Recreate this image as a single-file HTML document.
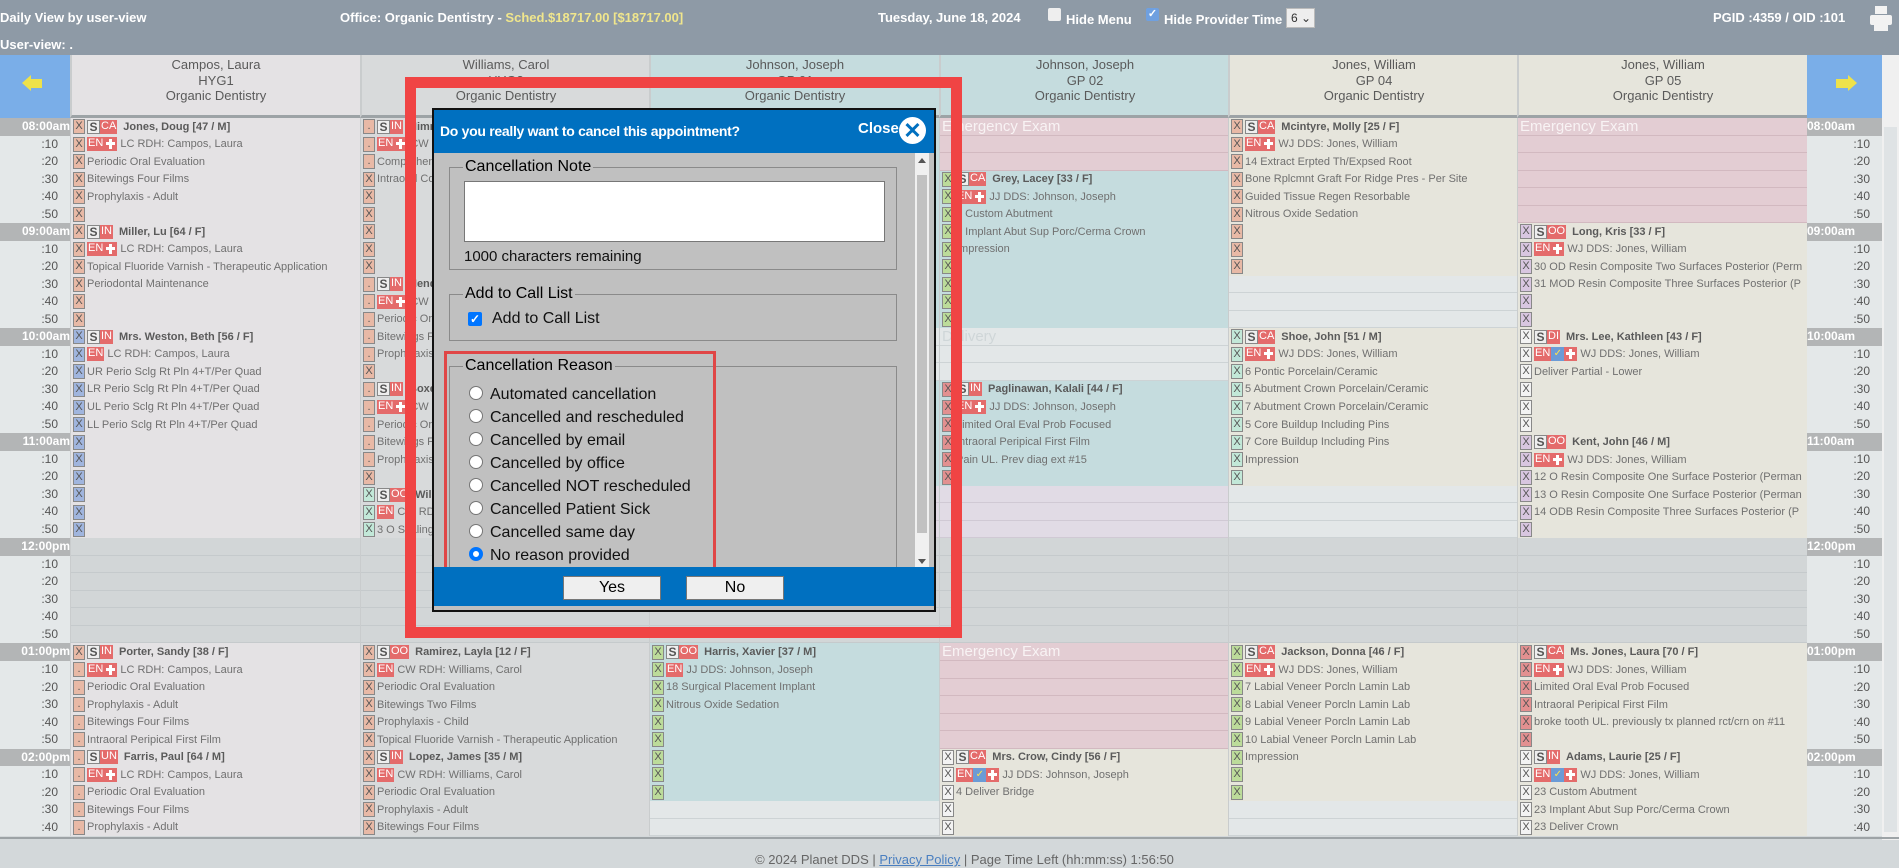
<!DOCTYPE html>
<html><head><meta charset="utf-8">
<style>
*{box-sizing:border-box;margin:0;padding:0}
body{width:1899px;height:868px;overflow:hidden;background:#d3d8da;font-family:"Liberation Sans",sans-serif;position:relative}
.a{position:absolute}
.top{left:0;top:0;width:1899px;height:55px;background:#8e9aa6;color:#fff;font-weight:bold;font-size:13px}
.top span{position:absolute;white-space:nowrap}
.hdr{top:55px;height:63px;width:290px;text-align:center;font-size:13px;color:#5a5a5a;line-height:15.5px;padding-top:2px;border-left:2px solid #c9cccd;border-bottom:3px solid #9da3a6}
.arr{background:#7aaee8;top:55px;height:63px}
.col{top:118px;width:290px;border-left:1px solid #c9cccd;font-size:11px;color:#707070}
.r{height:17.53px;white-space:nowrap;overflow:hidden;display:flex;align-items:center;padding-left:2px}
.e{background:#e3e7e8;border-bottom:1px solid #cdd3d5}
.l{background:#d2d6d7;border-bottom:1px solid #c5cacc}
.pk{background:#e3cdd3;border-bottom:1px solid #d2b9c0}
.lv{background:#e1dbe5;border-bottom:1px solid #d0c9d4}
.em{color:rgba(255,255,255,.75);font-size:15px}
i{font-style:normal;display:inline-block;height:14px;line-height:13px;text-align:center;font-size:11px;flex:none}
.x{width:12px;height:15px;border:1px solid #888;color:#555;margin-right:2px}
.o{background:#e8b9a6}.bl{background:#a0b5de}.g{background:#bcdc9a}.m{background:#c2e8d8}.v{background:#d8c6e0}.w{background:#f3f3f3}.rd{background:#e29090}
.s{width:13px;border:1px solid #888;background:#eee;color:#555;font-weight:bold;font-size:12px}
.t{background:#e46b6b;color:#fff;padding:0 1px;font-size:11px}
.p{width:13px;background:#e46b6b;position:relative}
.p:after{content:"";position:absolute;left:5px;top:2px;width:3px;height:10px;background:#fff}
.p:before{content:"";position:absolute;left:2px;top:5px;width:9px;height:3px;background:#fff}
.c{width:13px;background:#6b9bd6;color:#ffe24a;font-size:10px}
b{font-weight:bold;color:#5a5a5a;margin-left:6px}
.tc{top:118px;width:70px;font-size:12px;color:#555;background:#e4e8e9}
.tc div{height:17.53px;line-height:17.53px;text-align:right;padding-right:12px}
.tc .h{background:#b3b5b6;color:#fff;font-weight:bold;text-align:right;padding-right:0}
</style></head><body>

<div class="a top">
<span style="left:0;top:10px">Daily View by user-view</span>
<span style="left:340px;top:10px">Office: Organic Dentistry - <span style="position:static;color:#f0e68c">Sched.$18717.00 [$18717.00]</span></span>
<span style="left:878px;top:10px">Tuesday, June 18, 2024</span>
<span style="left:1048px;top:8px;width:13px;height:13px;background:#eee;border-radius:2px"></span>
<span style="left:1066px;top:12px">Hide Menu</span>
<span style="left:1146px;top:8px;width:13px;height:13px;background:#6fa0e0;border-radius:2px;font-size:11px;text-align:center;line-height:13px">✓</span>
<span style="left:1164px;top:12px">Hide Provider Time</span>
<span style="left:1286px;top:8px;width:29px;height:20px;background:#eee;border:1px solid #bbb;color:#333;font-weight:normal;font-size:12px;line-height:18px;padding-left:4px">6 ⌄</span>
<span style="left:1713px;top:10px">PGID :4359 / OID :101</span>
<span style="left:1870px;top:6px;width:22px;height:26px">
<span style="left:5px;top:0;width:12px;height:8px;background:#f2f2f2"></span>
<span style="left:0;top:9px;width:22px;height:10px;background:#f2f2f2;border-radius:2px"></span>
<span style="left:4px;top:19px;width:14px;height:6px;background:#f2f2f2"></span></span>
<span style="left:0;top:37px">User-view: .</span>
</div>

<div class="a arr" style="left:0;width:70px"><div class="a" style="left:30px;top:24px;width:12px;height:9px;background:#eee24a"></div><div class="a" style="left:22px;top:20px;width:0;height:0;border-top:8px solid transparent;border-bottom:8px solid transparent;border-right:9px solid #eee24a"></div></div>
<div class="a arr" style="left:1807px;width:75px"><div class="a" style="left:29px;top:24px;width:12px;height:9px;background:#eee24a"></div><div class="a" style="left:41px;top:20px;width:0;height:0;border-top:8px solid transparent;border-bottom:8px solid transparent;border-left:9px solid #eee24a"></div></div>
<div class="a" style="left:1882px;top:55px;width:17px;height:785px;background:#f0f0f0"><div class="a" style="left:2px;top:72px;width:13px;height:705px;background:#dfe3e5"></div></div>

<div class="a hdr" style="left:70px;background:#e4e2e4">Campos, Laura<br>HYG1<br>Organic Dentistry</div>
<div class="a hdr" style="left:360px;background:#d8dadb">Williams, Carol<br>HYG3<br>Organic Dentistry</div>
<div class="a hdr" style="left:649px;background:#c5dcde">Johnson, Joseph<br>GP 01<br>Organic Dentistry</div>
<div class="a hdr" style="left:939px;background:#c5dcde">Johnson, Joseph<br>GP 02<br>Organic Dentistry</div>
<div class="a hdr" style="left:1228px;background:#e6e5dc">Jones, William<br>GP 04<br>Organic Dentistry</div>
<div class="a hdr" style="left:1517px;background:#e6e5dc">Jones, William<br>GP 05<br>Organic Dentistry</div>

<div class="a tc" style="left:0">
<div class="h">08:00am</div><div>:10</div><div>:20</div><div>:30</div><div>:40</div><div>:50</div>
<div class="h">09:00am</div><div>:10</div><div>:20</div><div>:30</div><div>:40</div><div>:50</div>
<div class="h">10:00am</div><div>:10</div><div>:20</div><div>:30</div><div>:40</div><div>:50</div>
<div class="h">11:00am</div><div>:10</div><div>:20</div><div>:30</div><div>:40</div><div>:50</div>
<div class="h">12:00pm</div><div>:10</div><div>:20</div><div>:30</div><div>:40</div><div>:50</div>
<div class="h">01:00pm</div><div>:10</div><div>:20</div><div>:30</div><div>:40</div><div>:50</div>
<div class="h">02:00pm</div><div>:10</div><div>:20</div><div>:30</div><div>:40</div>
</div>
<div class="a tc" style="left:1807px;width:75px">
<div class="h" style="text-align:left">08:00am</div><div>:10</div><div>:20</div><div>:30</div><div>:40</div><div>:50</div>
<div class="h" style="text-align:left">09:00am</div><div>:10</div><div>:20</div><div>:30</div><div>:40</div><div>:50</div>
<div class="h" style="text-align:left">10:00am</div><div>:10</div><div>:20</div><div>:30</div><div>:40</div><div>:50</div>
<div class="h" style="text-align:left">11:00am</div><div>:10</div><div>:20</div><div>:30</div><div>:40</div><div>:50</div>
<div class="h" style="text-align:left">12:00pm</div><div>:10</div><div>:20</div><div>:30</div><div>:40</div><div>:50</div>
<div class="h" style="text-align:left">01:00pm</div><div>:10</div><div>:20</div><div>:30</div><div>:40</div><div>:50</div>
<div class="h" style="text-align:left">02:00pm</div><div>:10</div><div>:20</div><div>:30</div><div>:40</div>
</div>

<!-- Campos -->
<div class="a col" style="left:70px;background:#e4e2e4">
<div class="r"><i class="x o">X</i><i class="s">S</i><i class="t">CA</i><b>Jones, Doug [47 / M]</b></div>
<div class="r"><i class="x o">X</i><i class="t">EN</i><i class="p"></i>&nbsp;LC RDH: Campos, Laura</div>
<div class="r"><i class="x o">X</i>Periodic Oral Evaluation</div>
<div class="r"><i class="x o">X</i>Bitewings Four Films</div>
<div class="r"><i class="x o">X</i>Prophylaxis - Adult</div>
<div class="r"><i class="x o">X</i></div>
<div class="r"><i class="x o">X</i><i class="s">S</i><i class="t">IN</i><b>Miller, Lu [64 / F]</b></div>
<div class="r"><i class="x o">X</i><i class="t">EN</i><i class="p"></i>&nbsp;LC RDH: Campos, Laura</div>
<div class="r"><i class="x o">X</i>Topical Fluoride Varnish - Therapeutic Application</div>
<div class="r"><i class="x o">X</i>Periodontal Maintenance</div>
<div class="r"><i class="x o">X</i></div>
<div class="r"><i class="x o">X</i></div>
<div class="r"><i class="x bl">X</i><i class="s">S</i><i class="t">IN</i><b>Mrs. Weston, Beth [56 / F]</b></div>
<div class="r"><i class="x bl">X</i><i class="t">EN</i>&nbsp;LC RDH: Campos, Laura</div>
<div class="r"><i class="x bl">X</i>UR Perio Sclg Rt Pln 4+T/Per Quad</div>
<div class="r"><i class="x bl">X</i>LR Perio Sclg Rt Pln 4+T/Per Quad</div>
<div class="r"><i class="x bl">X</i>UL Perio Sclg Rt Pln 4+T/Per Quad</div>
<div class="r"><i class="x bl">X</i>LL Perio Sclg Rt Pln 4+T/Per Quad</div>
<div class="r"><i class="x bl">X</i></div><div class="r"><i class="x bl">X</i></div><div class="r"><i class="x bl">X</i></div><div class="r"><i class="x bl">X</i></div><div class="r"><i class="x bl">X</i></div><div class="r"><i class="x bl">X</i></div>
<div class="r l"></div><div class="r l"></div><div class="r l"></div><div class="r l"></div><div class="r l"></div><div class="r l"></div>
<div class="r"><i class="x o">X</i><i class="s">S</i><i class="t">IN</i><b>Porter, Sandy [38 / F]</b></div>
<div class="r"><i class="x o">.</i><i class="t">EN</i><i class="p"></i>&nbsp;LC RDH: Campos, Laura</div>
<div class="r"><i class="x o">.</i>Periodic Oral Evaluation</div>
<div class="r"><i class="x o">.</i>Prophylaxis - Adult</div>
<div class="r"><i class="x o">.</i>Bitewings Four Films</div>
<div class="r"><i class="x o">.</i>Intraoral Peripical First Film</div>
<div class="r"><i class="x o">.</i><i class="s">S</i><i class="t">UN</i><b>Farris, Paul [64 / M]</b></div>
<div class="r"><i class="x o">.</i><i class="t">EN</i><i class="p"></i>&nbsp;LC RDH: Campos, Laura</div>
<div class="r"><i class="x o">.</i>Periodic Oral Evaluation</div>
<div class="r"><i class="x o">.</i>Bitewings Four Films</div>
<div class="r"><i class="x o">.</i>Prophylaxis - Adult</div>
</div>

<!-- Williams -->
<div class="a col" style="left:360px;background:#d8dadb">
<div class="r"><i class="x o">.</i><i class="s">S</i><i class="t">IN</i><b>Nimmo, Ann [33 / F]</b></div>
<div class="r"><i class="x o">.</i><i class="t">EN</i><i class="p"></i>&nbsp;CW RDH: Williams, Carol</div>
<div class="r"><i class="x o">.</i>Comprehensive Oral Evaluation</div>
<div class="r"><i class="x o">X</i>Intraoral Complete Series</div>
<div class="r"><i class="x o">X</i></div><div class="r"><i class="x o">X</i></div><div class="r"><i class="x o">X</i></div><div class="r"><i class="x o">X</i></div><div class="r"><i class="x o">X</i></div>
<div class="r"><i class="x o">.</i><i class="s">S</i><i class="t">IN</i><b>Henderson, Amy [29 / F]</b></div>
<div class="r"><i class="x o">.</i><i class="t">EN</i><i class="p"></i>&nbsp;CW RDH: Williams, Carol</div>
<div class="r"><i class="x o">.</i>Periodic Oral Evaluation</div>
<div class="r"><i class="x o">.</i>Bitewings Four Films</div>
<div class="r"><i class="x o">.</i>Prophylaxis - Adult</div>
<div class="r"><i class="x o">X</i></div>
<div class="r"><i class="x o">.</i><i class="s">S</i><i class="t">IN</i><b>Boxer, Tim [41 / M]</b></div>
<div class="r"><i class="x o">.</i><i class="t">EN</i><i class="p"></i>&nbsp;CW RDH: Williams, Carol</div>
<div class="r"><i class="x o">.</i>Periodic Oral Evaluation</div>
<div class="r"><i class="x o">.</i>Bitewings Four Films</div>
<div class="r"><i class="x o">.</i>Prophylaxis - Adult</div>
<div class="r"><i class="x o">X</i></div>
<div class="r"><i class="x m">X</i><i class="s">S</i><i class="t">OO</i><b>Wilson, Dan [52 / M]</b></div>
<div class="r"><i class="x m">X</i><i class="t">EN</i>&nbsp;CW RDH: Williams, Carol</div>
<div class="r"><i class="x m">X</i>3 O Scaling</div>
<div class="r l"></div><div class="r l"></div><div class="r l"></div><div class="r l"></div><div class="r l"></div><div class="r l"></div>
<div class="r"><i class="x o">X</i><i class="s">S</i><i class="t">OO</i><b>Ramirez, Layla [12 / F]</b></div>
<div class="r"><i class="x o">X</i><i class="t">EN</i>&nbsp;CW RDH: Williams, Carol</div>
<div class="r"><i class="x o">X</i>Periodic Oral Evaluation</div>
<div class="r"><i class="x o">X</i>Bitewings Two Films</div>
<div class="r"><i class="x o">X</i>Prophylaxis - Child</div>
<div class="r"><i class="x o">X</i>Topical Fluoride Varnish - Therapeutic Application</div>
<div class="r"><i class="x o">X</i><i class="s">S</i><i class="t">IN</i><b>Lopez, James [35 / M]</b></div>
<div class="r"><i class="x o">X</i><i class="t">EN</i>&nbsp;CW RDH: Williams, Carol</div>
<div class="r"><i class="x o">X</i>Periodic Oral Evaluation</div>
<div class="r"><i class="x o">X</i>Prophylaxis - Adult</div>
<div class="r"><i class="x o">X</i>Bitewings Four Films</div>
</div>

<!-- Johnson GP01 -->
<div class="a col" style="left:649px;background:#c5dcde">
<div class="r"></div><div class="r"></div><div class="r"></div><div class="r"><i class="x g">X</i></div><div class="r"><i class="x g">X</i></div><div class="r"><i class="x g">X</i></div><div class="r"><i class="x g">X</i></div><div class="r"><i class="x g">X</i></div><div class="r"><i class="x g">X</i></div><div class="r"><i class="x g">X</i></div><div class="r"><i class="x g">X</i></div><div class="r"><i class="x g">X</i></div>
<div class="r e"></div><div class="r e"></div><div class="r e"></div>
<div class="r"><i class="x rd">X</i></div><div class="r"><i class="x rd">X</i></div><div class="r"><i class="x rd">X</i></div><div class="r"><i class="x rd">X</i></div><div class="r"><i class="x rd">X</i></div><div class="r"><i class="x rd">X</i></div>
<div class="r lv"></div><div class="r lv"></div><div class="r lv"></div>
<div class="r l"></div><div class="r l"></div><div class="r l"></div><div class="r l"></div><div class="r l"></div><div class="r l"></div>
<div class="r"><i class="x g">X</i><i class="s">S</i><i class="t">OO</i><b>Harris, Xavier [37 / M]</b></div>
<div class="r"><i class="x g">X</i><i class="t">EN</i>&nbsp;JJ DDS: Johnson, Joseph</div>
<div class="r"><i class="x g">X</i>18 Surgical Placement Implant</div>
<div class="r"><i class="x g">X</i>Nitrous Oxide Sedation</div>
<div class="r"><i class="x g">X</i></div><div class="r"><i class="x g">X</i></div><div class="r"><i class="x g">X</i></div><div class="r"><i class="x g">X</i></div><div class="r"><i class="x g">X</i></div>
<div class="r e"></div><div class="r e"></div>
</div>

<!-- Johnson GP02 -->
<div class="a col" style="left:939px;background:#c5dcde">
<div class="r pk em">Emergency Exam</div><div class="r pk"></div><div class="r pk"></div>
<div class="r"><i class="x g">X</i><i class="s">S</i><i class="t">CA</i><b>Grey, Lacey [33 / F]</b></div>
<div class="r"><i class="x g">X</i><i class="t">EN</i><i class="p"></i>&nbsp;JJ DDS: Johnson, Joseph</div>
<div class="r"><i class="x g">X</i>4 Custom Abutment</div>
<div class="r"><i class="x g">X</i>4 Implant Abut Sup Porc/Cerma Crown</div>
<div class="r"><i class="x g">X</i>Impression</div>
<div class="r"><i class="x g">X</i></div><div class="r"><i class="x g">X</i></div><div class="r"><i class="x g">X</i></div><div class="r"><i class="x g">X</i></div>
<div class="r e em" style="color:#cfd6d8">Delivery</div><div class="r e"></div><div class="r e"></div>
<div class="r"><i class="x rd">X</i><i class="s">S</i><i class="t">IN</i><b>Paglinawan, Kalali [44 / F]</b></div>
<div class="r"><i class="x rd">X</i><i class="t">EN</i><i class="p"></i>&nbsp;JJ DDS: Johnson, Joseph</div>
<div class="r"><i class="x rd">X</i>Limited Oral Eval Prob Focused</div>
<div class="r"><i class="x rd">X</i>Intraoral Peripical First Film</div>
<div class="r"><i class="x rd">X</i>Pain UL. Prev diag ext #15</div>
<div class="r"><i class="x rd">X</i></div>
<div class="r lv"></div><div class="r lv"></div><div class="r lv"></div>
<div class="r l"></div><div class="r l"></div><div class="r l"></div><div class="r l"></div><div class="r l"></div><div class="r l"></div>
<div class="r pk em">Emergency Exam</div><div class="r pk"></div><div class="r pk"></div><div class="r pk"></div><div class="r pk"></div><div class="r pk"></div>
<div class="r" style="background:#e6e5dc"><i class="x w">X</i><i class="s">S</i><i class="t">CA</i><b>Mrs. Crow, Cindy [56 / F]</b></div>
<div class="r" style="background:#e6e5dc"><i class="x w">X</i><i class="t">EN</i><i class="c">✓</i><i class="p"></i>&nbsp;JJ DDS: Johnson, Joseph</div>
<div class="r" style="background:#e6e5dc"><i class="x w">X</i>4 Deliver Bridge</div>
<div class="r" style="background:#e6e5dc"><i class="x w">X</i></div>
<div class="r" style="background:#e6e5dc"><i class="x w">X</i></div>
</div>

<!-- GP04 -->
<div class="a col" style="left:1228px;background:#e6e5dc">
<div class="r"><i class="x o">X</i><i class="s">S</i><i class="t">CA</i><b>Mcintyre, Molly [25 / F]</b></div>
<div class="r"><i class="x o">X</i><i class="t">EN</i><i class="p"></i>&nbsp;WJ DDS: Jones, William</div>
<div class="r"><i class="x o">X</i>14 Extract Erpted Th/Expsed Root</div>
<div class="r"><i class="x o">X</i>Bone Rplcmnt Graft For Ridge Pres - Per Site</div>
<div class="r"><i class="x o">X</i>Guided Tissue Regen Resorbable</div>
<div class="r"><i class="x o">X</i>Nitrous Oxide Sedation</div>
<div class="r"><i class="x o">X</i></div><div class="r"><i class="x o">X</i></div><div class="r"><i class="x o">X</i></div>
<div class="r e"></div><div class="r e"></div><div class="r e"></div>
<div class="r"><i class="x m">X</i><i class="s">S</i><i class="t">CA</i><b>Shoe, John [51 / M]</b></div>
<div class="r"><i class="x m">X</i><i class="t">EN</i><i class="p"></i>&nbsp;WJ DDS: Jones, William</div>
<div class="r"><i class="x m">X</i>6 Pontic Porcelain/Ceramic</div>
<div class="r"><i class="x m">X</i>5 Abutment Crown Porcelain/Ceramic</div>
<div class="r"><i class="x m">X</i>7 Abutment Crown Porcelain/Ceramic</div>
<div class="r"><i class="x m">X</i>5 Core Buildup Including Pins</div>
<div class="r"><i class="x m">X</i>7 Core Buildup Including Pins</div>
<div class="r"><i class="x m">X</i>Impression</div>
<div class="r"><i class="x m">X</i></div>
<div class="r e"></div><div class="r e"></div><div class="r e"></div>
<div class="r l"></div><div class="r l"></div><div class="r l"></div><div class="r l"></div><div class="r l"></div><div class="r l"></div>
<div class="r"><i class="x g">X</i><i class="s">S</i><i class="t">CA</i><b>Jackson, Donna [46 / F]</b></div>
<div class="r"><i class="x g">X</i><i class="t">EN</i><i class="p"></i>&nbsp;WJ DDS: Jones, William</div>
<div class="r"><i class="x g">X</i>7 Labial Veneer Porcln Lamin Lab</div>
<div class="r"><i class="x g">X</i>8 Labial Veneer Porcln Lamin Lab</div>
<div class="r"><i class="x g">X</i>9 Labial Veneer Porcln Lamin Lab</div>
<div class="r"><i class="x g">X</i>10 Labial Veneer Porcln Lamin Lab</div>
<div class="r"><i class="x g">X</i>Impression</div>
<div class="r"><i class="x g">X</i></div><div class="r"><i class="x g">X</i></div>
<div class="r e"></div><div class="r e"></div>
</div>

<!-- GP05 -->
<div class="a col" style="left:1517px;background:#e6e5dc">
<div class="r pk em">Emergency Exam</div><div class="r pk"></div><div class="r pk"></div><div class="r pk"></div><div class="r pk"></div><div class="r pk"></div>
<div class="r"><i class="x v">X</i><i class="s">S</i><i class="t">OO</i><b>Long, Kris [33 / F]</b></div>
<div class="r"><i class="x v">X</i><i class="t">EN</i><i class="p"></i>&nbsp;WJ DDS: Jones, William</div>
<div class="r"><i class="x v">X</i>30 OD Resin Composite Two Surfaces Posterior (Perm</div>
<div class="r"><i class="x v">X</i>31 MOD Resin Composite Three Surfaces Posterior (P</div>
<div class="r"><i class="x v">X</i></div><div class="r"><i class="x v">X</i></div>
<div class="r"><i class="x w">X</i><i class="s">S</i><i class="t">DI</i><b>Mrs. Lee, Kathleen [43 / F]</b></div>
<div class="r"><i class="x w">X</i><i class="t">EN</i><i class="c">✓</i><i class="p"></i>&nbsp;WJ DDS: Jones, William</div>
<div class="r"><i class="x w">X</i>Deliver Partial - Lower</div>
<div class="r"><i class="x w">X</i></div><div class="r"><i class="x w">X</i></div><div class="r"><i class="x w">X</i></div>
<div class="r"><i class="x v">X</i><i class="s">S</i><i class="t">OO</i><b>Kent, John [46 / M]</b></div>
<div class="r"><i class="x v">X</i><i class="t">EN</i><i class="p"></i>&nbsp;WJ DDS: Jones, William</div>
<div class="r"><i class="x v">X</i>12 O Resin Composite One Surface Posterior (Perman</div>
<div class="r"><i class="x v">X</i>13 O Resin Composite One Surface Posterior (Perman</div>
<div class="r"><i class="x v">X</i>14 ODB Resin Composite Three Surfaces Posterior (P</div>
<div class="r"><i class="x v">X</i></div>
<div class="r l"></div><div class="r l"></div><div class="r l"></div><div class="r l"></div><div class="r l"></div><div class="r l"></div>
<div class="r"><i class="x rd">X</i><i class="s">S</i><i class="t">CA</i><b>Ms. Jones, Laura [70 / F]</b></div>
<div class="r"><i class="x rd">X</i><i class="t">EN</i><i class="p"></i>&nbsp;WJ DDS: Jones, William</div>
<div class="r"><i class="x rd">X</i>Limited Oral Eval Prob Focused</div>
<div class="r"><i class="x rd">X</i>Intraoral Peripical First Film</div>
<div class="r"><i class="x rd">X</i>broke tooth UL. previously tx planned rct/crn on #11</div>
<div class="r"><i class="x rd">X</i></div>
<div class="r"><i class="x w">X</i><i class="s">S</i><i class="t">IN</i><b>Adams, Laurie [25 / F]</b></div>
<div class="r"><i class="x w">X</i><i class="t">EN</i><i class="c">✓</i><i class="p"></i>&nbsp;WJ DDS: Jones, William</div>
<div class="r"><i class="x w">X</i>23 Custom Abutment</div>
<div class="r"><i class="x w">X</i>23 Implant Abut Sup Porc/Cerma Crown</div>
<div class="r"><i class="x w">X</i>23 Deliver Crown</div>
</div>

<div class="a" style="left:0;top:837px;width:1899px;height:2px;background:#9da3a6"></div>
<div class="a" style="left:0;top:852px;width:1899px;text-align:center;font-size:13px;color:#666;padding-left:30px">© 2024 Planet DDS | <span style="color:#4a7fc0;text-decoration:underline">Privacy Policy</span> | Page Time Left (hh:mm:ss) 1:56:50</div>

<!-- red highlight -->
<div class="a" style="left:405px;top:77px;width:557px;height:561px;border:11px solid #f04444"></div>

<!-- dialog -->
<div class="a" style="left:432px;top:108px;width:504px;height:504px;border:2px solid #111;background:#c0c0c0"></div>
<div class="a" style="left:434px;top:110px;width:500px;height:43px;background:#0070c0"></div>
<div class="a" style="left:440px;top:123px;color:#fff;font-weight:bold;font-size:14px;letter-spacing:-0.3px">Do you really want to cancel this appointment?</div>
<div class="a" style="left:858px;top:120px;color:#fff;font-weight:bold;font-size:15px">Close</div>
<div class="a" style="left:899px;top:117px;width:27px;height:27px;border-radius:50%;background:#fff;color:#0070c0;font-weight:bold;font-size:22px;line-height:27px;text-align:center">✕</div>

<div class="a" style="left:449px;top:167px;width:448px;height:103px;border:1px solid #8a8a8a"></div>
<div class="a" style="left:463px;top:158px;background:#c0c0c0;padding:0 2px;font-size:16px;color:#000">Cancellation Note</div>
<div class="a" style="left:464px;top:181px;width:421px;height:61px;background:#fff;border:1px solid #777"></div>
<div class="a" style="left:464px;top:248px;font-size:15px;color:#111">1000 characters remaining</div>

<div class="a" style="left:449px;top:294px;width:448px;height:47px;border:1px solid #8a8a8a"></div>
<div class="a" style="left:463px;top:285px;background:#c0c0c0;padding:0 2px;font-size:16px;color:#000">Add to Call List</div>
<div class="a" style="left:468px;top:312px;width:14px;height:14px;border-radius:2px;background:#0075ff;color:#fff;font-size:12px;line-height:14px;text-align:center;font-weight:bold">✓</div>
<div class="a" style="left:492px;top:310px;font-size:16px;color:#111">Add to Call List</div>

<div class="a" style="left:449px;top:366px;width:448px;height:202px;border:1px solid #8a8a8a;border-bottom:none"></div>
<div class="a" style="left:463px;top:357px;background:#c0c0c0;padding:0 2px;font-size:16px;color:#000">Cancellation Reason</div>
<div class="a" style="left:469px;top:383px;font-size:16px;color:#111;line-height:23px">
<div><span style="display:inline-block;width:14px;height:14px;border:1px solid #767676;border-radius:50%;background:#fff;vertical-align:-1px;margin-right:7px"></span>Automated cancellation</div>
<div><span style="display:inline-block;width:14px;height:14px;border:1px solid #767676;border-radius:50%;background:#fff;vertical-align:-1px;margin-right:7px"></span>Cancelled and rescheduled</div>
<div><span style="display:inline-block;width:14px;height:14px;border:1px solid #767676;border-radius:50%;background:#fff;vertical-align:-1px;margin-right:7px"></span>Cancelled by email</div>
<div><span style="display:inline-block;width:14px;height:14px;border:1px solid #767676;border-radius:50%;background:#fff;vertical-align:-1px;margin-right:7px"></span>Cancelled by office</div>
<div><span style="display:inline-block;width:14px;height:14px;border:1px solid #767676;border-radius:50%;background:#fff;vertical-align:-1px;margin-right:7px"></span>Cancelled NOT rescheduled</div>
<div><span style="display:inline-block;width:14px;height:14px;border:1px solid #767676;border-radius:50%;background:#fff;vertical-align:-1px;margin-right:7px"></span>Cancelled Patient Sick</div>
<div><span style="display:inline-block;width:14px;height:14px;border:1px solid #767676;border-radius:50%;background:#fff;vertical-align:-1px;margin-right:7px"></span>Cancelled same day</div>
<div><span style="display:inline-block;width:14px;height:14px;border:4px solid #0075ff;border-radius:50%;background:#fff;vertical-align:-1px;margin-right:7px;box-shadow:inset 0 0 0 1px #fff"></span>No reason provided</div>
</div>
<div class="a" style="left:444px;top:351px;width:272px;height:220px;border:3px solid #e04646"></div>

<div class="a" style="left:915px;top:153px;width:14px;height:414px;background:#f0f0f0"></div>
<div class="a" style="left:917px;top:175px;width:10px;height:358px;background:#c1c1c1"></div>
<div class="a" style="left:918px;top:158px;width:0;height:0;border-left:4px solid transparent;border-right:4px solid transparent;border-bottom:5px solid #555"></div>
<div class="a" style="left:918px;top:559px;width:0;height:0;border-left:4px solid transparent;border-right:4px solid transparent;border-top:5px solid #555"></div>

<div class="a" style="left:434px;top:567px;width:500px;height:39px;background:#0070c0"></div>
<div class="a" style="left:563px;top:576px;width:98px;height:24px;background:#efefef;border:1px solid #767676;text-align:center;font-size:16px;line-height:22px;color:#000">Yes</div>
<div class="a" style="left:686px;top:576px;width:98px;height:24px;background:#efefef;border:1px solid #767676;text-align:center;font-size:16px;line-height:22px;color:#000">No</div>
</body></html>
